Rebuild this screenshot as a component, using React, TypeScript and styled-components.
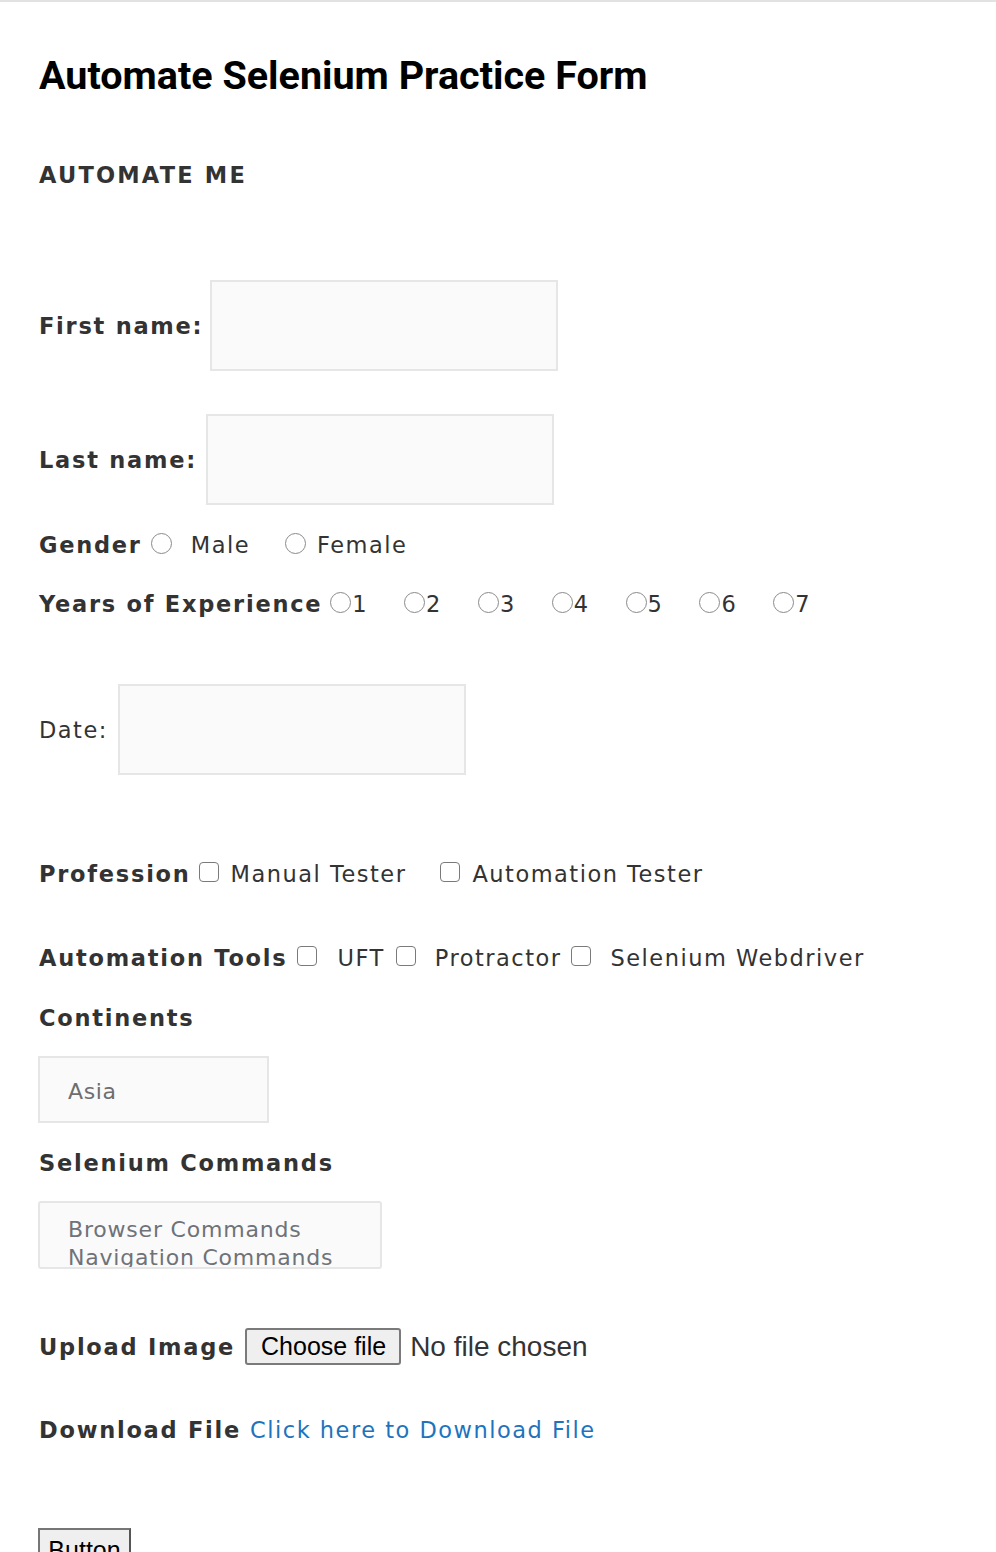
import React from "react"
import styled, { createGlobalStyle } from "styled-components"

const GlobalStyle = createGlobalStyle`
  html, body {
    margin: 0;
    padding: 0;
    background: #fff;
  }
  body {
    font-family: "DejaVu Sans", Verdana, sans-serif;
    color: #333;
    font-size: 22.5px;
    letter-spacing: 1.5px;
  }
`

const Page = styled.div`
  border-top: 2px solid #e2e2e2;
  padding: 0 0 0 39px;
`

const Title = styled.h1`
  font-family: Roboto, "Liberation Sans", sans-serif;
  font-weight: 700;
  font-size: 39.5px;
  line-height: 48px;
  letter-spacing: 0;
  color: #000;
  margin: 50px 0 0;
`

const SubTitle = styled.h2`
  font-family: "DejaVu Sans", Verdana, sans-serif;
  font-weight: 700;
  font-size: 22.5px;
  line-height: 26px;
  letter-spacing: 2.2px;
  color: #333;
  margin: 62px 0 0;
`

interface RowProps {
  $top: number
}

const Row = styled.div<RowProps>`
  display: flex;
  align-items: center;
  min-height: 30px;
  margin-top: ${(p) => p.$top}px;
`

const Label = styled.span<{ $gap?: number }>`
  font-weight: 700;
  letter-spacing: 1.75px;
  line-height: 30px;
  margin-right: ${(p) => (p.$gap ?? 10)}px;
  white-space: nowrap;
`

const PlainLabel = styled.span`
  line-height: 30px;
  margin-right: 10px;
`

const TextBox = styled.input`
  box-sizing: border-box;
  width: 348px;
  height: 91px;
  background: #fafafa;
  border: 2px solid #e6e6e6;
  outline: none;
  font: inherit;
`

interface ChoiceProps {
  $pad: number
  $after: number
}

const Choice = styled.label<ChoiceProps>`
  display: inline-flex;
  align-items: center;
  line-height: 30px;
  margin-right: ${(p) => p.$after}px;
  white-space: nowrap;
  input {
    margin: 0 ${(p) => p.$pad}px 0 0;
  }
`

const Radio = styled.input.attrs({ type: "radio" })`
  appearance: none;
  box-sizing: border-box;
  width: 21px;
  height: 21px;
  border: 1.5px solid #8a8a8a;
  border-radius: 50%;
  background: #fff;
  position: relative;
  top: -2px;
`

const Check = styled.input.attrs({ type: "checkbox" })`
  appearance: none;
  box-sizing: border-box;
  width: 20px;
  height: 20px;
  border: 1.5px solid #7a7a7a;
  border-radius: 4px;
  background: #fff;
  position: relative;
  top: -2px;
`

const Heading = styled.div<RowProps>`
  font-weight: 700;
  letter-spacing: 1.75px;
  line-height: 30px;
  margin-top: ${(p) => p.$top}px;
`

const SelectBox = styled.select`
  appearance: none;
  display: block;
  box-sizing: border-box;
  width: 231px;
  height: 67px;
  margin: 23px 0 0 -1px;
  padding: 4px 0 0 28px;
  background: #fafafa;
  border: 2px solid #e6e6e6;
  border-radius: 0;
  font-family: "DejaVu Sans", Verdana, sans-serif;
  font-size: 22px;
  letter-spacing: 0.6px;
  color: #6e6e6e;
  outline: none;
`

const MultiBox = styled.div`
  box-sizing: border-box;
  width: 344px;
  height: 68px;
  margin: 23px 0 0 -1px;
  padding: 13px 0 0 28px;
  background: #fafafa;
  border: 2px solid #e6e6e6;
  border-radius: 3px;
  overflow: hidden;
`

const ListOption = styled.div`
  font-size: 22px;
  letter-spacing: 0.8px;
  line-height: 28px;
  color: #6e7279;
  white-space: nowrap;
`

const FileButton = styled.button`
  box-sizing: border-box;
  height: 37px;
  padding: 0 13px 0 14px;
  margin-right: 9px;
  font-family: "Liberation Sans", Arial, sans-serif;
  font-size: 25px;
  letter-spacing: 0;
  color: #000;
  background: #efefef;
  border: 2px solid #7a7a7a;
  border-radius: 3px;
`

const FileNote = styled.span`
  font-family: "Liberation Sans", Arial, sans-serif;
  font-size: 28px;
  letter-spacing: 0;
  color: #333;
`

const Link = styled.a`
  color: #1e73be;
  text-decoration: none;
  line-height: 30px;
`

const PlainButton = styled.button`
  display: block;
  box-sizing: border-box;
  margin: 83px 0 0 -1px;
  width: 93px;
  height: 40px;
  padding: 0;
  font-family: "Liberation Sans", Arial, sans-serif;
  font-size: 25px;
  letter-spacing: 0;
  color: #000;
  background: #efefef;
  border: 2px solid #767676;
  border-right-color: #555;
  border-bottom-color: #555;
  text-align: center;
  line-height: 40px;
`

const years = ["1", "2", "3", "4", "5", "6", "7"]

export default function App() {
  return (
    <>
      <GlobalStyle />
      <Page>
        <Title>Automate Selenium Practice Form</Title>
        <SubTitle>AUTOMATE ME</SubTitle>

        <Row $top={92}>
          <Label $gap={7}>First name:</Label>
          <TextBox type="text" />
        </Row>
        <Row $top={43}>
          <Label $gap={9}>Last name:</Label>
          <TextBox type="text" />
        </Row>

        <Row $top={25}>
          <Label $gap={9}>Gender</Label>
          <Choice $pad={19} $after={35}>
            <Radio name="gender" />
            Male
          </Choice>
          <Choice $pad={11} $after={0}>
            <Radio name="gender" />
            Female
          </Choice>
        </Row>

        <Row $top={29}>
          <Label $gap={8}>Years of Experience</Label>
          {years.map((y) => (
            <Choice key={y} $pad={1} $after={36}>
              <Radio name="exp" />
              {y}
            </Choice>
          ))}
        </Row>

        <Row $top={65}>
          <PlainLabel>Date:</PlainLabel>
          <TextBox type="text" />
        </Row>

        <Row $top={84}>
          <Label $gap={8}>Profession</Label>
          <Choice $pad={12} $after={34}>
            <Check />
            Manual Tester
          </Choice>
          <Choice $pad={12} $after={0}>
            <Check />
            Automation Tester
          </Choice>
        </Row>

        <Row $top={54}>
          <Label $gap={10}>Automation Tools</Label>
          <Choice $pad={20} $after={11}>
            <Check />
            UFT
          </Choice>
          <Choice $pad={19} $after={10}>
            <Check />
            Protractor
          </Choice>
          <Choice $pad={19} $after={0}>
            <Check />
            Selenium Webdriver
          </Choice>
        </Row>

        <Heading $top={30}>Continents</Heading>
        <SelectBox defaultValue="Asia">
          <option>Asia</option>
          <option>Europe</option>
          <option>Africa</option>
          <option>Australia</option>
          <option>South America</option>
          <option>North America</option>
          <option>Antartica</option>
        </SelectBox>

        <Heading $top={25}>Selenium Commands</Heading>
        <MultiBox>
          <ListOption>Browser Commands</ListOption>
          <ListOption>Navigation Commands</ListOption>
          <ListOption>Switch Commands</ListOption>
          <ListOption>Wait Commands</ListOption>
          <ListOption>WebElement Commands</ListOption>
        </MultiBox>

        <Row $top={59}>
          <Label $gap={10}>Upload Image</Label>
          <FileButton type="button">Choose file</FileButton>
          <FileNote>No file chosen</FileNote>
        </Row>

        <Row $top={50}>
          <Label $gap={9}>Download File</Label>
          <Link href="#">Click here to Download File</Link>
        </Row>

        <PlainButton type="button">Button</PlainButton>
      </Page>
    </>
  )
}
